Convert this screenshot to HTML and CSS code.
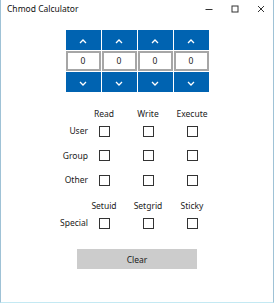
FILE: index.html
```html
<!DOCTYPE html>
<html lang="en">
<head>
    <meta charset="UTF-8">
    <title>Chmod Calculator</title>
    <link rel="stylesheet" href="styles.css">
</head>
<body>
    <div class="window">
        <div class="titlebar">
            <div class="title">Chmod Calculator</div>
            <div class="caption-buttons">
                <svg class="cap-icon" width="8" height="8" viewBox="0 0 8 8"><path d="M0.5 4.5H7.5" stroke="#333" stroke-width="1"/></svg>
                <svg class="cap-icon" width="8" height="8" viewBox="0 0 8 8"><rect x="1" y="1" width="6" height="6" fill="none" stroke="#333" stroke-width="1"/></svg>
                <svg class="cap-icon" width="8" height="8" viewBox="0 0 8 8"><path d="M1 1L7 7M7 1L1 7" stroke="#333" stroke-width="1"/></svg>
            </div>
        </div>

        <div class="spinners">
            <div class="spinner">
                <button class="spin-btn"><svg width="8" height="5" viewBox="0 0 8 5"><path d="M1 4L4 1L7 4" fill="none" stroke="#fff" stroke-width="1.3"/></svg></button>
                <div class="digit">0</div>
                <button class="spin-btn"><svg width="8" height="5" viewBox="0 0 8 5"><path d="M1 1L4 4L7 1" fill="none" stroke="#fff" stroke-width="1.3"/></svg></button>
            </div>
            <div class="spinner">
                <button class="spin-btn"><svg width="8" height="5" viewBox="0 0 8 5"><path d="M1 4L4 1L7 4" fill="none" stroke="#fff" stroke-width="1.3"/></svg></button>
                <div class="digit">0</div>
                <button class="spin-btn"><svg width="8" height="5" viewBox="0 0 8 5"><path d="M1 1L4 4L7 1" fill="none" stroke="#fff" stroke-width="1.3"/></svg></button>
            </div>
            <div class="spinner">
                <button class="spin-btn"><svg width="8" height="5" viewBox="0 0 8 5"><path d="M1 4L4 1L7 4" fill="none" stroke="#fff" stroke-width="1.3"/></svg></button>
                <div class="digit">0</div>
                <button class="spin-btn"><svg width="8" height="5" viewBox="0 0 8 5"><path d="M1 1L4 4L7 1" fill="none" stroke="#fff" stroke-width="1.3"/></svg></button>
            </div>
            <div class="spinner">
                <button class="spin-btn"><svg width="8" height="5" viewBox="0 0 8 5"><path d="M1 4L4 1L7 4" fill="none" stroke="#fff" stroke-width="1.3"/></svg></button>
                <div class="digit">0</div>
                <button class="spin-btn"><svg width="8" height="5" viewBox="0 0 8 5"><path d="M1 1L4 4L7 1" fill="none" stroke="#fff" stroke-width="1.3"/></svg></button>
            </div>
        </div>

        <div class="perm-grid">
            <div></div>
            <div class="col-head">Read</div>
            <div class="col-head">Write</div>
            <div class="col-head">Execute</div>

            <div class="row-label">User</div>
            <input type="checkbox" class="check">
            <input type="checkbox" class="check">
            <input type="checkbox" class="check">

            <div class="row-label">Group</div>
            <input type="checkbox" class="check">
            <input type="checkbox" class="check">
            <input type="checkbox" class="check">

            <div class="row-label">Other</div>
            <input type="checkbox" class="check">
            <input type="checkbox" class="check">
            <input type="checkbox" class="check">
        </div>

        <div class="perm-grid special">
            <div></div>
            <div class="col-head">Setuid</div>
            <div class="col-head">Setgrid</div>
            <div class="col-head">Sticky</div>

            <div class="row-label">Special</div>
            <input type="checkbox" class="check">
            <input type="checkbox" class="check">
            <input type="checkbox" class="check">
        </div>

        <button class="clear-btn">Clear</button>
    </div>
</body>
</html>
```

FILE: styles.css
```css
* {
    margin: 0;
    padding: 0;
    box-sizing: border-box;
}

body {
    font-family: 'Noto Sans', 'Open Sans', sans-serif;
    font-size: 8.5px;
    color: #1a1a1a;
    background: #ffffff;
}

.window {
    width: 274px;
    height: 303px;
    background: #ffffff;
    border-left: 1px solid #9fc2d6;
    border-right: 1px solid #9fc2d6;
    border-bottom: 1px solid #c4e9f3;
}

.titlebar {
    height: 30px;
    display: flex;
    justify-content: space-between;
    align-items: flex-start;
    padding: 3px 0 0 6px;
}

.title {
    font-size: 8.5px;
    line-height: 11px;
    color: #111;
}

.caption-buttons {
    display: flex;
    gap: 18px;
    padding: 2px 8px 0 0;
}

.cap-icon {
    display: block;
}

.spinners {
    display: grid;
    grid-template-columns: repeat(4, 35px);
    column-gap: 1px;
    justify-content: center;
}

.spinner {
    display: flex;
    flex-direction: column;
    gap: 1px;
}

.spin-btn {
    height: 20px;
    border: none;
    background: #0063b1;
    display: flex;
    align-items: center;
    justify-content: center;
    padding-top: 3px;
}

.spin-btn svg {
    display: block;
}

.digit {
    height: 20px;
    border: 2px solid #a6a6a6;
    background: #ffffff;
    text-align: center;
    line-height: 16px;
    font-size: 8.5px;
}

.perm-grid {
    display: grid;
    grid-template-columns: 81px repeat(3, 44px);
    grid-template-rows: 10px;
    grid-auto-rows: 24.5px;
    align-items: center;
    justify-items: center;
    margin-top: 17px;
}

.perm-grid.special {
    margin-top: 8.5px;
}

.col-head {
    line-height: 10px;
    color: #222;
    white-space: nowrap;
}

.row-label {
    justify-self: end;
    margin-right: -6px;
    line-height: 12px;
    white-space: nowrap;
}

.check {
    appearance: none;
    width: 11px;
    height: 11px;
    border: 1.5px solid #333333;
    background: #ffffff;
    margin: 0;
}

.clear-btn {
    display: block;
    width: 120px;
    height: 20px;
    margin: 13.5px auto 0;
    border: none;
    background: #cccccc;
    font-family: 'Noto Sans', 'Open Sans', sans-serif;
    font-size: 8.5px;
    color: #1a1a1a;
}
```
